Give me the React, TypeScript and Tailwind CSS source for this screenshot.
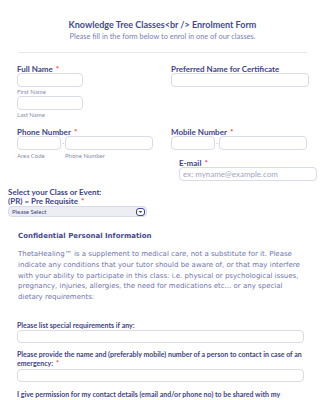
import React from "react";

const lato = { fontFamily: "Lato, 'Open Sans', sans-serif" };
const verdana = { fontFamily: "'DejaVu Sans', Verdana, sans-serif" };

function Label({ text, req }: { text: string; req?: boolean }) {
  return (
    <div className="text-[8px] font-bold leading-[8px] text-[#3f4483]">
      {text}
      {req && <span className="ml-[3px] text-[#e34b4b]">*</span>}
    </div>
  );
}

function Box({ w, placeholder }: { w: string; placeholder?: string }) {
  return (
    <div
      className={`${w} h-[14px] rounded-[4px] border border-[#d9dbe7] bg-white px-[3px] text-[8px] leading-[12px] text-[#a3a5c0]`}
    >
      {placeholder}
    </div>
  );
}

function Sub({ text }: { text: string }) {
  return <div className="mt-[1px] text-[6px] leading-[7px] text-[#8a8caf]">{text}</div>;
}

function Dash() {
  return <span className="w-[4px] text-center text-[6px] leading-[6px] text-[#9a9cb8]">-</span>;
}

export default function App() {
  return (
    <div className="h-[400px] w-[325px] overflow-hidden bg-white" style={lato}>
      <div className="pt-[18px] text-center">
        <div className="text-[9px] font-bold leading-[13px] text-[#434b8a]">
          Knowledge Tree Classes&lt;br /&gt; Enrolment Form
        </div>
        <div className="mt-[1px] text-[7.4px] leading-[10px] text-[#7b80b0]">
          Please fill in the form below to enrol in one of our classes.
        </div>
      </div>
      <div className="mx-[18px] mt-[10px] h-px bg-[#e6e6ec]" />

      {/* name + phone grid */}
      <div className="mt-[12px] grid grid-cols-[154px_1fr] pl-[17px]">
        <div>
          <Label text="Full Name" req />
          <Box w="w-[66px]" />
          <Sub text="First Name" />
          <div className="mt-[1px]">
            <Box w="w-[66px]" />
            <Sub text="Last Name" />
          </div>
        </div>
        <div>
          <Label text="Preferred Name for Certificate" />
          <Box w="w-[138px]" />
        </div>

        <div className="mt-[10px]">
          <Label text="Phone Number" req />
          <div className="flex items-center">
            <Box w="w-[44px]" />
            <Dash />
            <Box w="w-[88px]" />
          </div>
          <div className="mt-[1px] flex">
            <div className="w-[48px]">
              <Sub text="Area Code" />
            </div>
            <Sub text="Phone Number" />
          </div>
        </div>
        <div className="mt-[10px]">
          <Label text="Mobile Number" req />
          <div className="flex items-center">
            <Box w="w-[44px]" />
            <Dash />
            <Box w="w-[88px]" />
          </div>
        </div>
      </div>

      <div className="ml-[179px]">
        <Label text="E-mail" req />
        <Box w="w-[138px]" placeholder="ex: myname@example.com" />
      </div>

      {/* class select */}
      <div className="ml-[8px] mt-[7px] text-[8px] font-bold leading-[9px] text-[#3f4483]">
        <div>Select your Class or Event:</div>
        <div>
          (PR) = Pre Requisite<span className="ml-[3px] text-[#e34b4b]">*</span>
        </div>
        <div className="flex h-[11px] w-[139px] items-center justify-between rounded-[4px] border border-[#d9dbe7] bg-[#eceef4] pl-[3px] pr-[1px] font-normal">
          <span className="text-[6px] leading-[8px] text-[#3f4483]">Please Select</span>
          <span className="flex h-[8px] w-[9px] items-center justify-center rounded-[3px] border border-[#3f4483] bg-white">
            <svg width="5" height="4" viewBox="0 0 5 4">
              <path d="M0.5 1 L2.5 3 L4.5 1 Z" fill="#3f4483" />
            </svg>
          </span>
        </div>
      </div>

      {/* confidential info */}
      <div className="px-[18px] pt-[15px]" style={verdana}>
        <div className="text-[7px] font-bold leading-[9px] text-[#464a87]">Confidential Personal Information</div>
        <p className="mt-[8px] text-[7px] leading-[10.8px] text-[#7074ac]">
          ThetaHealing™ is a supplement to medical care, not a substitute for it. Please indicate any conditions that
          your tutor should be aware of, or that may interfere with your ability to participate in this class: i.e.
          physical or psychological issues, pregnancy, injuries, allergies, the need for medications etc... or any
          special dietary requirements:
        </p>
      </div>

      <div className="px-[17px] pt-[18px]">
        <div className="text-[7px] font-bold leading-[9px] text-[#3f4483]">Please list special requirements if any:</div>
        <div className="h-[13px] w-[287px] rounded-[4px] border border-[#d9dbe7]" />
        <div className="mt-[7px] text-[7px] font-bold leading-[9px] text-[#3f4483]">
          Please provide the name and (preferably mobile) number of a person to contact in case of an emergency:
          <span className="ml-[3px] text-[#e34b4b]">*</span>
        </div>
        <div className="mt-[1px] h-[13px] w-[287px] rounded-[4px] border border-[#d9dbe7]" />
        <div className="mt-[8px] text-[7px] font-bold leading-[9px] text-[#3f4483]">
          I give permission for my contact details (email and/or phone no) to be shared with my
        </div>
      </div>
    </div>
  );
}
